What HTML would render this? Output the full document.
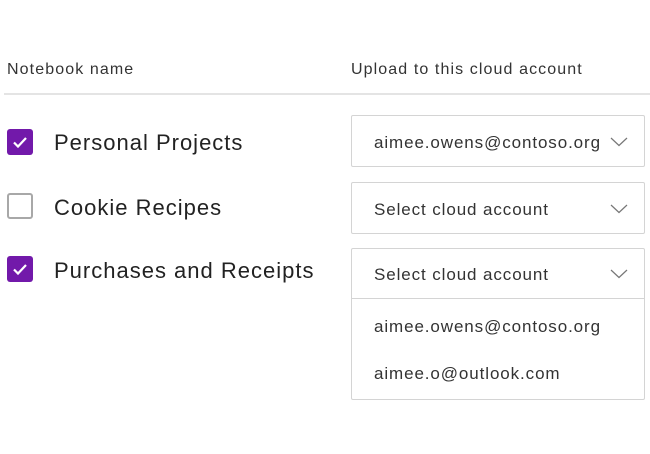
<!DOCTYPE html>
<html><head><style>
body{margin:0;width:650px;height:454px;background:#fff;position:relative;font-family:"Liberation Sans",sans-serif;color:#222;overflow:hidden}
.a{position:absolute}
.h{font-size:16px;top:61px;color:#333;letter-spacing:1.1px}
.cb{position:absolute;left:7px;width:26px;height:26px;border-radius:3px;box-sizing:border-box}
.on{background:#7219aa}
.off{border:2px solid #a8a8a8;background:#fff}
.lbl{position:absolute;left:54px;font-size:22px;color:#222;letter-spacing:1px}
.box{position:absolute;left:351px;width:294px;border:1px solid #d4d4d4;box-sizing:border-box;border-radius:2px}
.t{position:absolute;left:22px;font-size:17px;color:#333;letter-spacing:0.9px}
.chev{position:absolute;right:16px}
</style></head><body>
<div class="a h" style="left:7px">Notebook name</div>
<div class="a h" style="left:351px">Upload to this cloud account</div>
<div class="a" style="left:4px;top:93px;width:646px;height:2px;background:#e4e4e4"></div>

<div class="cb on" style="top:129px"><svg width="26" height="26"><path d="M7 13.5l4 4 8-8.5" stroke="#fff" stroke-width="2.2" fill="none"/></svg></div>
<div class="lbl" style="top:130px">Personal Projects</div>
<div class="cb off" style="top:193px"></div>
<div class="lbl" style="top:195px">Cookie Recipes</div>
<div class="cb on" style="top:256px"><svg width="26" height="26"><path d="M7 13.5l4 4 8-8.5" stroke="#fff" stroke-width="2.2" fill="none"/></svg></div>
<div class="lbl" style="top:258px">Purchases and Receipts</div>

<div class="box" style="top:115px;height:52px"><div class="t" style="top:17px">aimee.owens@contoso.org</div><svg class="chev" style="top:21px" width="18" height="11"><path d="M1 1l8 7.5 8-7.5" stroke="#777" stroke-width="1.2" fill="none"/></svg></div>
<div class="box" style="top:182px;height:52px"><div class="t" style="top:17px">Select cloud account</div><svg class="chev" style="top:21px" width="18" height="11"><path d="M1 1l8 7.5 8-7.5" stroke="#777" stroke-width="1.2" fill="none"/></svg></div>
<div class="box" style="top:248px;height:152px">
<div class="t" style="top:16px">Select cloud account</div><svg class="chev" style="top:20px" width="18" height="11"><path d="M1 1l8 7.5 8-7.5" stroke="#777" stroke-width="1.2" fill="none"/></svg>
<div class="a" style="left:0;right:0;top:49px;height:1px;background:#d4d4d4"></div>
<div class="t" style="top:68px">aimee.owens@contoso.org</div>
<div class="t" style="top:115px">aimee.o@outlook.com</div>
</div>
</body></html>
